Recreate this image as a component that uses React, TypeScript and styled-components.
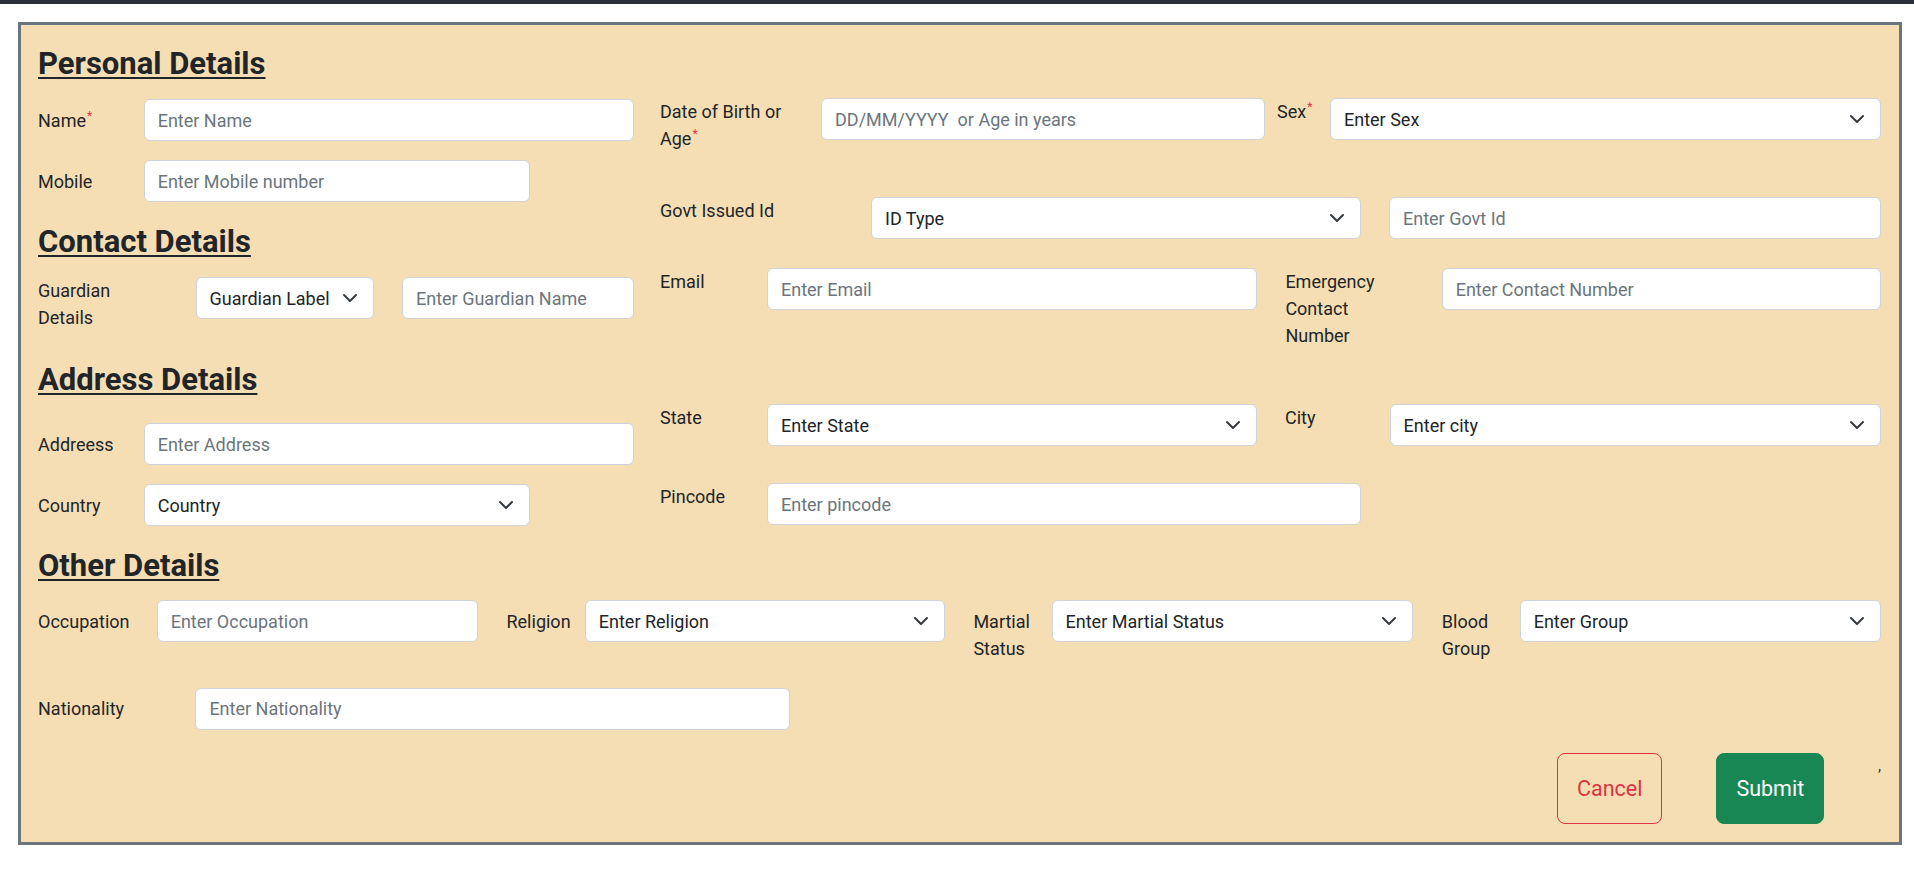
import React from "react";
import styled, { createGlobalStyle } from "styled-components";

const GlobalStyle = createGlobalStyle`
  html, body { margin: 0; padding: 0; background: #ffffff; }
  body {
    font-family: Roboto, "Liberation Sans", Arial, sans-serif;
    color: #212529;
  }
  *, *::before, *::after { box-sizing: border-box; }
`;

const TopBar = styled.div`
  height: 4px;
  background: #2b303b;
`;

const Card = styled.form`
  margin: 18px 12px 0 18px;
  border: 3px solid #6c757d;
  background: #f5deb3;
  padding: 20px 18px 18px 17px;
`;

const TopGrid = styled.div`
  display: grid;
  grid-template-columns: 596px 1fr;
  column-gap: 26px;
  align-items: start;
`;

const Column = styled.div`
  display: flex;
  flex-direction: column;
`;

const Heading = styled.h3<{ $mt?: number; $mb: number }>`
  margin: ${(p) => p.$mt ?? 0}px 0 ${(p) => p.$mb}px 0;
  font-size: 31px;
  line-height: 37px;
  font-weight: 700;
  color: #212529;
  text-decoration: underline;
  text-decoration-thickness: 2px;
  text-underline-offset: 3px;
  align-self: flex-start;
`;

const Row = styled.div<{ $cols: string; $gap: number; $mt?: number }>`
  display: grid;
  grid-template-columns: ${(p) => p.$cols};
  column-gap: ${(p) => p.$gap}px;
  margin-top: ${(p) => p.$mt ?? 0}px;
  align-items: start;
`;

const Label = styled.label<{ $padded?: boolean; $maxW?: number }>`
  font-size: 18px;
  line-height: 27px;
  color: #212529;
  padding-top: ${(p) => (p.$padded ? 7.5 : 0)}px;
  max-width: ${(p) => (p.$maxW ? `${p.$maxW}px` : "none")};
  white-space: normal;
`;

const Keep = styled.span`
  white-space: nowrap;
  display: inline-block;
`;

const Req = styled.sup`
  color: #dc3545;
  font-size: 12px;
  line-height: 0;
  vertical-align: 7px;
  margin-left: 1px;
`;

const Input = styled.input`
  display: block;
  width: 100%;
  height: 42px;
  padding: 0 13px;
  border: 1px solid #ced4da;
  border-radius: 6px;
  background: #ffffff;
  font-family: Roboto, "Liberation Sans", Arial, sans-serif;
  font-size: 18px;
  color: #212529;
  outline: none;
  &::placeholder {
    color: #6c757d;
    opacity: 1;
  }
`;

const Select = styled.select`
  display: block;
  width: 100%;
  height: 42px;
  padding: 0 40px 0 13px;
  border: 1px solid #ced4da;
  border-radius: 6px;
  font-family: Roboto, "Liberation Sans", Arial, sans-serif;
  font-size: 18px;
  color: #212529;
  outline: none;
  appearance: none;
  -webkit-appearance: none;
  background-color: #ffffff;
  background-image: url("data:image/svg+xml,%3csvg xmlns='http://www.w3.org/2000/svg' viewBox='0 0 16 16'%3e%3cpath fill='none' stroke='%23343a40' stroke-linecap='round' stroke-linejoin='round' stroke-width='2' d='m2 5 6 6 6-6'/%3e%3c/svg%3e");
  background-repeat: no-repeat;
  background-position: right 15px center;
  background-size: 16px 16px;
`;

const ButtonRow = styled.div`
  display: flex;
  justify-content: flex-end;
  align-items: flex-start;
  gap: 54px;
  margin-top: 23px;
`;

const Button = styled.button<{ $variant: "cancel" | "submit" }>`
  height: 71.5px;
  padding: 0 19px;
  border-radius: 8px;
  font-family: Roboto, "Liberation Sans", Arial, sans-serif;
  font-size: 21.5px;
  cursor: pointer;
  border: 1px solid ${(p) => (p.$variant === "cancel" ? "#dc3545" : "#198754")};
  background: ${(p) => (p.$variant === "cancel" ? "transparent" : "#198754")};
  color: ${(p) => (p.$variant === "cancel" ? "#dc3545" : "#ffffff")};
`;

const Mark = styled.span`
  font-size: 14px;
  line-height: 14px;
  margin-top: 6px;
  color: #212529;
`;

type Opt = { label: string };
const Sel = ({ label }: Opt) => (
  <Select defaultValue={label}>
    <option value={label}>{label}</option>
  </Select>
);

export default function App() {
  return (
    <>
      <GlobalStyle />
      <TopBar />
      <Card onSubmit={(e) => e.preventDefault()}>
        <TopGrid>
          <Column>
            <Heading $mb={17}>Personal Details</Heading>
            <Row $cols="93.7px 1fr" $gap={12}>
              <Label $padded>
                Name<Req>*</Req>
              </Label>
              <Input placeholder="Enter Name" />
            </Row>
            <Row $cols="93.7px 386.3px" $gap={12} $mt={19}>
              <Label $padded>Mobile</Label>
              <Input placeholder="Enter Mobile number" />
            </Row>

            <Heading $mt={21} $mb={17}>Contact Details</Heading>
            <Row $cols="129.5px 178.5px 1fr" $gap={28}>
              <Label $maxW={90}>Guardian Details</Label>
              <Sel label="Guardian Label" />
              <Input placeholder="Enter Guardian Name" />
            </Row>

            <Heading $mt={30} $mb={25}>Address Details</Heading>
            <Row $cols="93.7px 1fr" $gap={12}>
              <Label $padded>Addreess</Label>
              <Input placeholder="Enter Address" />
            </Row>
            <Row $cols="93.7px 386.3px" $gap={12} $mt={19}>
              <Label $padded>Country</Label>
              <Sel label="Country" />
            </Row>
          </Column>

          <Column>
            <Row $cols="149px 444px 41px 1fr" $gap={12} $mt={53}>
              <Label>
                Date of Birth or{" "}
                <Keep>
                  Age<Req>*</Req>
                </Keep>
              </Label>
              <Input placeholder="DD/MM/YYYY  or Age in years" />
              <Label>
                Sex<Req>*</Req>
              </Label>
              <Sel label="Enter Sex" />
            </Row>
            <Row $cols="183px 490px 1fr" $gap={28} $mt={45}>
              <Label>Govt Issued Id</Label>
              <Sel label="ID Type" />
              <Input placeholder="Enter Govt Id" />
            </Row>
            <Row $cols="79px 490.4px 128.3px 1fr" $gap={28} $mt={29}>
              <Label>Email</Label>
              <Input placeholder="Enter Email" />
              <Label $maxW={110}>Emergency Contact Number</Label>
              <Input placeholder="Enter Contact Number" />
            </Row>
            <Row $cols="79px 490px 76.6px 1fr" $gap={28} $mt={55}>
              <Label>State</Label>
              <Sel label="Enter State" />
              <Label>City</Label>
              <Sel label="Enter city" />
            </Row>
            <Row $cols="79px 594px" $gap={28} $mt={37}>
              <Label>Pincode</Label>
              <Input placeholder="Enter pincode" />
            </Row>
          </Column>
        </TopGrid>

        <Heading $mt={20.5} $mb={16.5}>Other Details</Heading>
        <Row
          $cols="90.2px 321.3px 49.8px 360.1px 49.7px 361.8px 49.3px 1fr"
          $gap={28.5}
        >
          <Label $padded>Occupation</Label>
          <Input placeholder="Enter Occupation" />
          <Label $padded>Religion</Label>
          <Sel label="Enter Religion" />
          <Label $padded>Martial Status</Label>
          <Sel label="Enter Martial Status" />
          <Label $padded>Blood Group</Label>
          <Sel label="Enter Group" />
        </Row>
        <Row $cols="145.4px 594.4px" $gap={12} $mt={26}>
          <Label $padded>Nationality</Label>
          <Input placeholder="Enter Nationality" />
        </Row>

        <ButtonRow>
          <Button type="button" $variant="cancel">
            Cancel
          </Button>
          <Button type="submit" $variant="submit">
            Submit
          </Button>
          <Mark>,</Mark>
        </ButtonRow>
      </Card>
    </>
  );
}
